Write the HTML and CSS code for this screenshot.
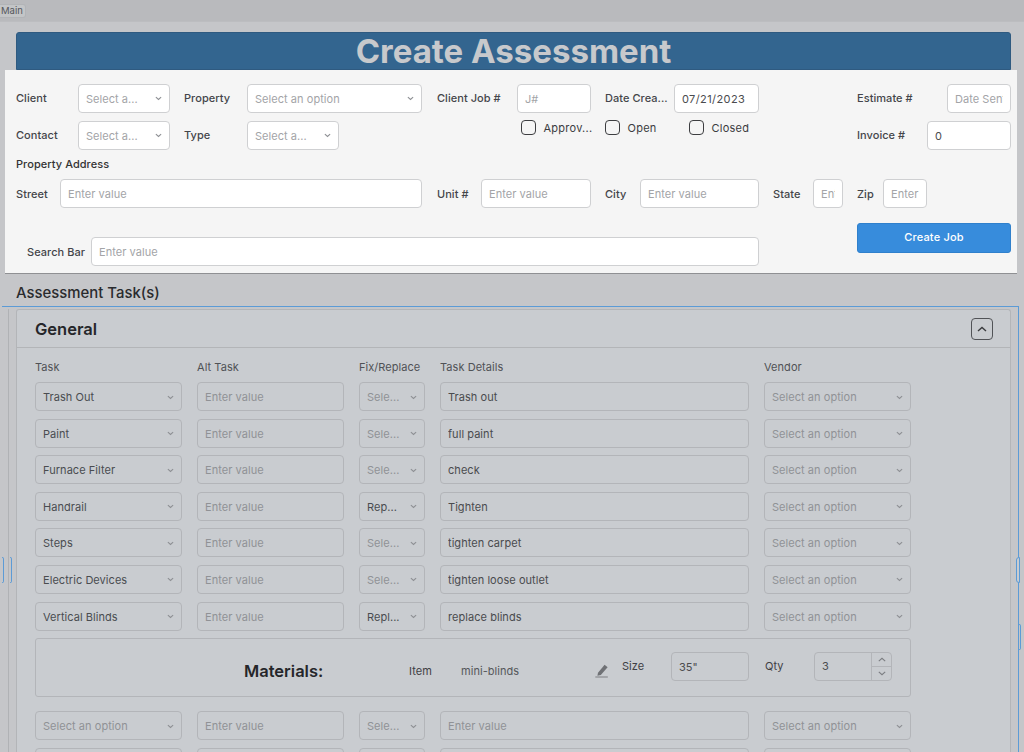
FILE: index.html
```html
<!DOCTYPE html>
<html lang="en">
<head>
<meta charset="utf-8">
<title>Create Assessment</title>
<link rel="stylesheet" href="styles.css">
</head>
<body>
<svg class="defs" width="0" height="0" aria-hidden="true"><defs>
  <symbol id="chev" viewBox="0 0 8 5"><path d="M1 1l3 2.6L7 1" fill="none" stroke="currentColor" stroke-width="1.3"/></symbol>
  <symbol id="up" viewBox="0 0 10 6"><path d="M1 5l4-3.6L9 5" fill="none" stroke="currentColor" stroke-width="1.4"/></symbol>
</defs></svg>

<div class="topbar"><span class="tab">Main</span></div>

<header class="banner"><h1>Create Assessment</h1></header>

<form class="panel">
  <div class="row">
    <label class="lbl w62">Client</label>
    <div class="sel w92"><span class="ph">Select a...</span><svg class="chev"><use href="#chev"/></svg></div>
    <label class="lbl w63 m14">Property</label>
    <div class="sel w175"><span class="ph">Select an option</span><svg class="chev"><use href="#chev"/></svg></div>
    <label class="lbl w80 m15">Client Job #</label>
    <input class="inp w74" placeholder="J#">
    <label class="lbl w69 m14">Date Crea...</label>
    <input class="inp w85 date" value="07/21/2023">
    <label class="lbl w90 m98">Estimate #</label>
    <input class="inp w64" placeholder="Date Sent">
  </div>
  <div class="row r2">
    <label class="lbl w62">Contact</label>
    <div class="sel w92"><span class="ph">Select a...</span><svg class="chev"><use href="#chev"/></svg></div>
    <label class="lbl w63 m14">Type</label>
    <div class="sel w92"><span class="ph">Select a...</span><svg class="chev"><use href="#chev"/></svg></div>
    <div class="checks">
      <label class="chk"><span class="box"></span>Approv...</label>
      <label class="chk"><span class="box"></span>Open</label>
      <label class="chk"><span class="box"></span>Closed</label>
    </div>
    <label class="lbl w70">Invoice #</label>
    <input class="inp w84" value="0">
  </div>
  <div class="addr-title">Property Address</div>
  <div class="row">
    <label class="lbl w44">Street</label>
    <input class="inp w362" placeholder="Enter value">
    <label class="lbl w44 m15">Unit #</label>
    <input class="inp w110" placeholder="Enter value">
    <label class="lbl w35 m14">City</label>
    <input class="inp w119" placeholder="Enter value">
    <label class="lbl w40 m14">State</label>
    <input class="inp w30" placeholder="Enter value">
    <label class="lbl w26 m14">Zip</label>
    <input class="inp w44" placeholder="Enter value">
  </div>
  <div class="row r4">
    <div class="search">
      <label class="lbl w64">Search Bar</label>
      <input class="inp w668" placeholder="Enter value">
    </div>
    <button class="cta" type="button">Create Job</button>
  </div>
</form>

<h2 class="tasks-title">Assessment Task(s)</h2>

<section class="tasks">
  <span class="handle h-left-a"></span>
  <span class="handle h-left-b"></span>
  <span class="handle h-right-a"></span>
  <span class="handle h-right-b"></span>
  <div class="frame">
    <div class="card">
      <div class="card-head">
        <h3>General</h3>
        <button class="toggle" type="button" aria-label="Collapse"><svg class="up"><use href="#up"/></svg></button>
      </div>
      <div class="card-body">
        <div class="grid heads">
          <span>Task</span><span>Alt Task</span><span>Fix/Replace</span><span>Task Details</span><span>Vendor</span>
        </div>

        <div class="grid task">
          <div class="sel dim"><span class="val">Trash Out</span><svg class="chev"><use href="#chev"/></svg></div>
          <input class="inp dim" placeholder="Enter value">
          <div class="sel dim"><span class="ph">Sele...</span><svg class="chev"><use href="#chev"/></svg></div>
          <input class="inp dim" value="Trash out">
          <div class="sel dim"><span class="ph">Select an option</span><svg class="chev"><use href="#chev"/></svg></div>
        </div>
        <div class="grid task">
          <div class="sel dim"><span class="val">Paint</span><svg class="chev"><use href="#chev"/></svg></div>
          <input class="inp dim" placeholder="Enter value">
          <div class="sel dim"><span class="ph">Sele...</span><svg class="chev"><use href="#chev"/></svg></div>
          <input class="inp dim" value="full paint">
          <div class="sel dim"><span class="ph">Select an option</span><svg class="chev"><use href="#chev"/></svg></div>
        </div>
        <div class="grid task">
          <div class="sel dim"><span class="val">Furnace Filter</span><svg class="chev"><use href="#chev"/></svg></div>
          <input class="inp dim" placeholder="Enter value">
          <div class="sel dim"><span class="ph">Sele...</span><svg class="chev"><use href="#chev"/></svg></div>
          <input class="inp dim" value="check">
          <div class="sel dim"><span class="ph">Select an option</span><svg class="chev"><use href="#chev"/></svg></div>
        </div>
        <div class="grid task">
          <div class="sel dim"><span class="val">Handrail</span><svg class="chev"><use href="#chev"/></svg></div>
          <input class="inp dim" placeholder="Enter value">
          <div class="sel dim"><span class="val">Rep...</span><svg class="chev"><use href="#chev"/></svg></div>
          <input class="inp dim" value="Tighten">
          <div class="sel dim"><span class="ph">Select an option</span><svg class="chev"><use href="#chev"/></svg></div>
        </div>
        <div class="grid task">
          <div class="sel dim"><span class="val">Steps</span><svg class="chev"><use href="#chev"/></svg></div>
          <input class="inp dim" placeholder="Enter value">
          <div class="sel dim"><span class="ph">Sele...</span><svg class="chev"><use href="#chev"/></svg></div>
          <input class="inp dim" value="tighten carpet">
          <div class="sel dim"><span class="ph">Select an option</span><svg class="chev"><use href="#chev"/></svg></div>
        </div>
        <div class="grid task">
          <div class="sel dim"><span class="val">Electric Devices</span><svg class="chev"><use href="#chev"/></svg></div>
          <input class="inp dim" placeholder="Enter value">
          <div class="sel dim"><span class="ph">Sele...</span><svg class="chev"><use href="#chev"/></svg></div>
          <input class="inp dim" value="tighten loose outlet">
          <div class="sel dim"><span class="ph">Select an option</span><svg class="chev"><use href="#chev"/></svg></div>
        </div>
        <div class="grid task">
          <div class="sel dim"><span class="val">Vertical Blinds</span><svg class="chev"><use href="#chev"/></svg></div>
          <input class="inp dim" placeholder="Enter value">
          <div class="sel dim"><span class="val">Repl...</span><svg class="chev"><use href="#chev"/></svg></div>
          <input class="inp dim" value="replace blinds">
          <div class="sel dim"><span class="ph">Select an option</span><svg class="chev"><use href="#chev"/></svg></div>
        </div>

        <div class="materials">
          <strong class="mat-title low">Materials:</strong>
          <span class="mat-lbl mat-item low">Item</span>
          <span class="mat-val low">mini-blinds</span>
          <svg class="pencil low" viewBox="0 0 14 14"><path d="M3 8.8L9.6.8l3 2.5-6.8 7.6-3.4.8z" fill="#6f7175"/><rect x="0.3" y="12.4" width="12.5" height="1.2" fill="#8a8c90"/></svg>
          <div class="mat-up">
            <span class="mat-lbl mat-size">Size</span>
            <input class="inp dim w78" value="35&quot;">
            <span class="mat-lbl mat-qty">Qty</span>
            <div class="num">
              <span class="num-val">3</span>
              <div class="stepper">
                <span><svg class="step"><use href="#up"/></svg></span>
                <span><svg class="step down"><use href="#up"/></svg></span>
              </div>
            </div>
          </div>
        </div>

        <div class="grid task first-after">
          <div class="sel dim"><span class="ph">Select an option</span><svg class="chev"><use href="#chev"/></svg></div>
          <input class="inp dim" placeholder="Enter value">
          <div class="sel dim"><span class="ph">Sele...</span><svg class="chev"><use href="#chev"/></svg></div>
          <input class="inp dim" placeholder="Enter value">
          <div class="sel dim"><span class="ph">Select an option</span><svg class="chev"><use href="#chev"/></svg></div>
        </div>
        <div class="grid task">
          <div class="sel dim"></div>
          <input class="inp dim">
          <div class="sel dim"></div>
          <input class="inp dim">
          <div class="sel dim"></div>
        </div>
      </div>
    </div>
  </div>
</section>
</body>
</html>
```

FILE: styles.css
```css
* { box-sizing: border-box; }
html, body { margin: 0; height: 752px; overflow: hidden; }
body {
  background: #c5c6c9;
  font-family: Inter, "Liberation Sans", sans-serif;
  font-size: 11px;
  letter-spacing: 0.05px;
  color: #3a3b3e;
}
.defs { position: absolute; }

.topbar { height: 22px; background: #b9babd; border-bottom: 1px solid #bcbdc0; padding-top: 4px; }
.tab {
  display: block; width: 26px; height: 14px;
  background: #c3c5c7; border: 1px solid #b2b4b7; border-left: 0; border-radius: 0 3px 3px 0;
  font-size: 9.5px; letter-spacing: 0; color: #55575b; padding-left: 1px; line-height: 12px;
}

.banner {
  margin: 10px 13px 0 16px; height: 38px;
  background: #33658f; border: 1px solid #2f5a80; border-radius: 3px 3px 0 0;
}
.banner h1 {
  margin: 0; text-align: center; font-size: 33px; line-height: 37px; font-weight: 700;
  letter-spacing: 0; color: #c7c9cc;
}

.panel {
  position: relative; margin: 0 7px 0 5px; height: 204px;
  background: #f5f5f5; padding: 13.5px 6px 7px 11px;
  border-bottom: 1px solid #8f9093;
}
.row { display: flex; align-items: center; height: 29px; }
.r2 { margin-top: 8px; }
.r4 { margin-top: 15px; height: 43px; align-items: flex-start; }
.addr-title { margin-top: 7.5px; height: 14px; line-height: 14px; margin-bottom: 8px; font-weight: 500; color: #333; }

.lbl { flex: none; font-weight: 500; color: #44454a; white-space: nowrap; }
.inp, .sel {
  flex: none; height: 29px; background: #fff; border: 1px solid #cfd0d2; border-radius: 4px;
  font: inherit; font-size: 11px; letter-spacing: 0.05px; color: #4a4b4e; padding: 1px 7px 0;
}
.inp { outline: none; min-width: 0; }
.inp::placeholder { color: #a3a4a7; opacity: 1; }
.date { letter-spacing: 0.4px; }
.sel { display: flex; align-items: center; justify-content: space-between; padding-right: 7px; }
.ph { color: #a3a4a7; white-space: nowrap; }
.val { color: #4a4c50; white-space: nowrap; }
.chev { width: 7px; height: 5px; color: #8e9094; flex: none; }

.w26 { width: 26px; } .w30 { width: 30px; } .w35 { width: 35px; } .w40 { width: 40px; }
.w44 { width: 44px; } .w62 { width: 62px; } .w63 { width: 63px; } .w64 { width: 64px; }
.w69 { width: 69px; } .w70 { width: 70px; } .w74 { width: 74px; } .w78 { width: 78px; }
.w80 { width: 80px; } .w84 { width: 84px; } .w85 { width: 85px; } .w90 { width: 90px; } .w92 { width: 92px; }
.w110 { width: 110px; } .w119 { width: 119px; } .w175 { width: 175px; }
.w362 { width: 362px; } .w668 { width: 668px; }
.m14 { margin-left: 14px; } .m15 { margin-left: 15px; } .m98 { margin-left: 98px; }

.checks { display: flex; margin: -0.5px 84px 0 182px; align-self: flex-start; }
.chk { width: 84px; display: flex; align-items: center; gap: 8px; height: 15px; color: #3b3c3f; white-space: nowrap; letter-spacing: 0.25px; }
.box { width: 14.5px; height: 15px; flex: none; background: #f5f5f5; border: 1.3px solid #3d3e41; border-radius: 4px; }

.search { display: flex; align-items: center; margin: 14px 0 0 11px; }
.cta {
  margin-left: 98px; width: 154px; height: 30px; padding: 0 0 2px;
  background: #378cdc; border: 1px solid #2f80cc; border-radius: 3px;
  color: #fff; font: inherit; font-weight: 500; letter-spacing: 0.2px;
}

.tasks-title {
  margin: 0; padding: 10px 0 0 16px; height: 32px; line-height: 18px;
  font-size: 14.9px; font-weight: 500; letter-spacing: 0; color: #2a2b2e;
}

.tasks {
  position: relative; margin: 0 5px 0 2px; height: 460px;
  border-top: 1px solid #5c9bd6; border-right: 1px solid #5c9bd6; padding: 2px 7px 0 6px;
}
.frame { border-left: 1px solid #b0b2b5; padding-left: 7px; height: 100%; }
.handle { position: absolute; width: 2px; height: 26px; border: 1px solid #5c9bd6; border-left: 0; border-radius: 0 2px 2px 0; }
.h-left-a { left: 0; top: 250px; }
.h-left-b { left: 8px; top: 250px; }
.h-right-a { right: -2px; top: 250px; width: 4px; border-left: 1px solid #5c9bd6; border-radius: 3px 0 0 3px; background: #c9ccd0; }
.h-right-b { right: -3px; top: 317px; }

.card {
  width: 995px; height: 100%;
  background: #c9ccd0; border: 1px solid #b3b5b8; border-bottom: 0; border-radius: 3px 3px 0 0;
}
.card-head {
  height: 38px; display: flex; align-items: center; justify-content: space-between;
  padding: 0 17px 0 18px; border-bottom: 1px solid #b3b5b8;
}
.card-head h3 { margin: 0; font-size: 16.5px; font-weight: 600; letter-spacing: 0; color: #25262a; }
.toggle {
  width: 22px; height: 22px; padding: 0; display: flex; align-items: center; justify-content: center;
  background: transparent; border: 1.3px solid #515357; border-radius: 4px; color: #3a3b3e;
}
.up { width: 10px; height: 6px; }

.card-body { padding: 0 18px; }
.grid { display: grid; grid-template-columns: 147px 147px 66px 309px 147px; column-gap: 15px; }
.heads { height: 34px; padding-top: 12px; line-height: 14px; color: #505256; white-space: nowrap; }
.task { margin-bottom: 7.6px; }
.first-after { margin-top: 14.5px; }
.task > * { width: 100%; }
.dim { background: transparent; border: 1px solid #b3b5b9; }
.dim::placeholder, .dim .ph { color: #909296; }

.materials {
  display: flex; align-items: center; width: 876px; height: 58.5px;
  border: 1px solid #b3b5b9; border-radius: 3px; padding-left: 208px;
}
.low { margin-top: 8px; }
.mat-title { font-size: 16.5px; font-weight: 600; letter-spacing: 0; color: #25262a; width: 165px; flex: none; }
.mat-lbl { color: #3f4044; }
.mat-item { width: 52px; flex: none; }
.mat-val { width: 134px; flex: none; color: #55575b; }
.pencil { width: 14px; height: 14px; flex: none; }
.mat-up { display: flex; align-items: center; margin: -2px 0 0 13px; }
.mat-size { width: 49px; flex: none; }
.mat-qty { width: 49px; margin-left: 16px; flex: none; }
.num {
  width: 78px; height: 29px; display: flex; align-items: center; justify-content: space-between;
  border: 1px solid #b3b5b9; border-radius: 4px; padding-left: 7px; color: #4a4c50;
}
.stepper { display: flex; flex-direction: column; width: 20px; height: 100%; border-left: 1px solid #b3b5b9; }
.stepper span { flex: 1; display: flex; align-items: center; justify-content: center; color: #7c7e82; }
.stepper span + span { border-top: 1px solid #b3b5b9; }
.step { width: 8px; height: 5px; }
.down { transform: scaleY(-1); }
```
